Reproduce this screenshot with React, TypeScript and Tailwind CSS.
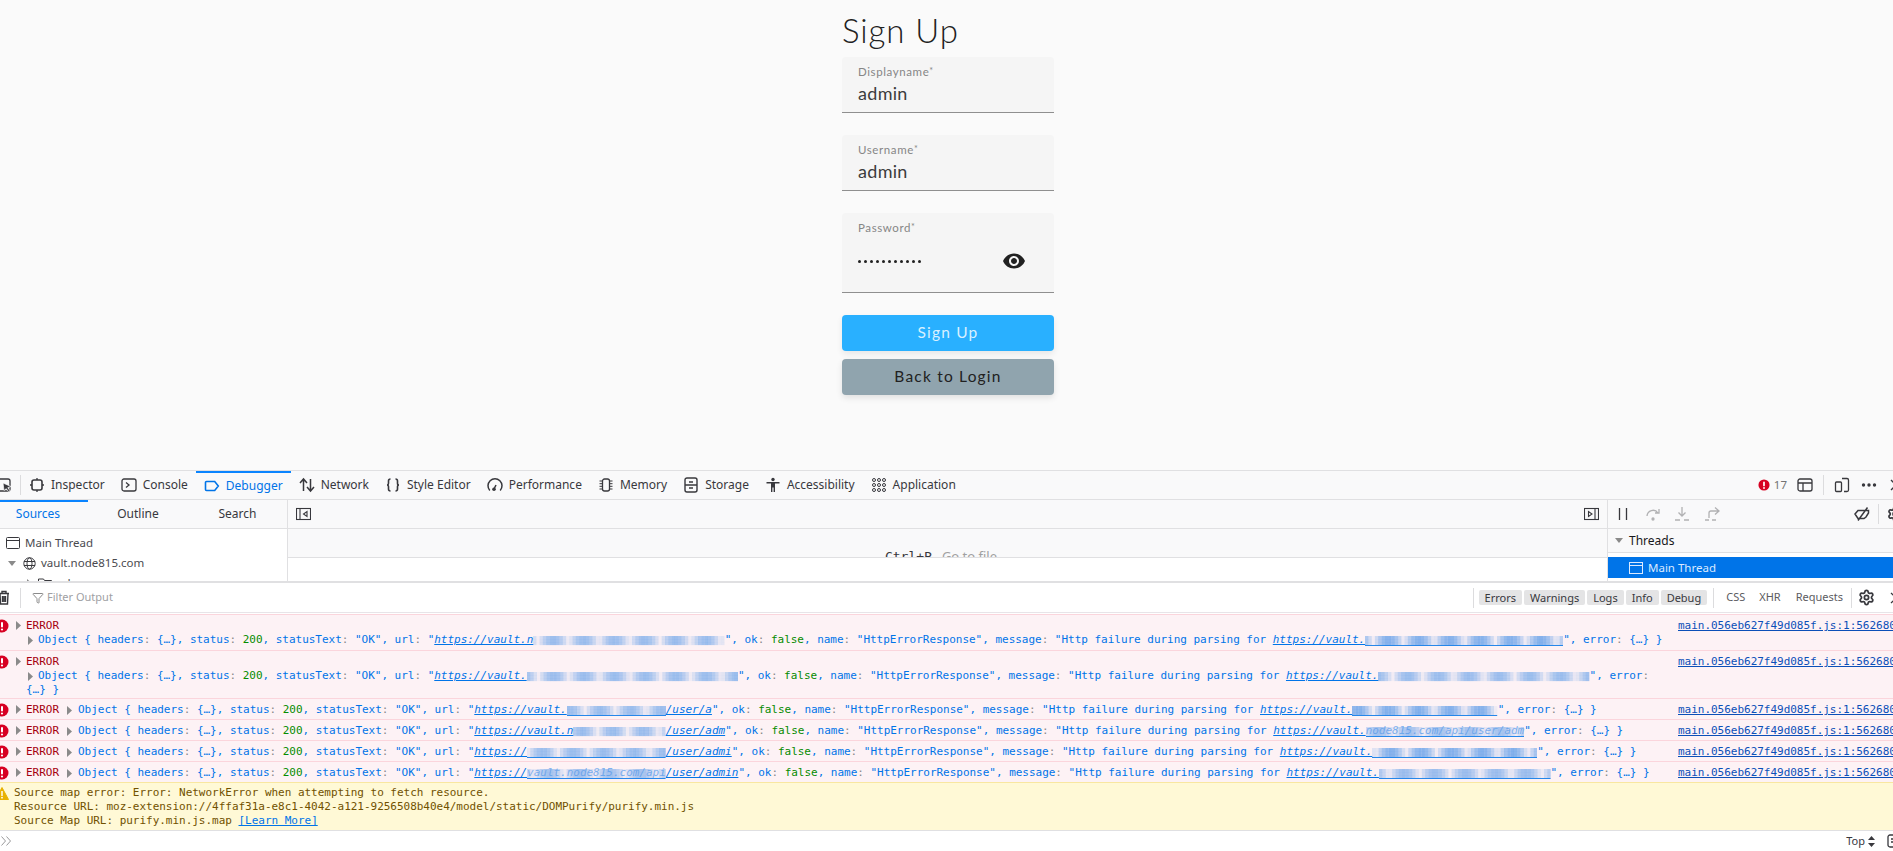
import React from "react";
import { Settings, Filter } from "lucide-react";

const I = ({ className = "", children, w = 16, h = 16, vb = "0 0 16 16" }: { className?: string; children: React.ReactNode; w?: number; h?: number; vb?: string }) => (
  <svg width={w} height={h} viewBox={vb} fill="none" stroke="currentColor" strokeWidth="1.3" className={"shrink-0 " + className}>{children}</svg>
);

const tabs: { name: string; icon: React.ReactNode; active?: boolean }[] = [
  { name: "Inspector", icon: <><rect x="3" y="3" width="10" height="10" rx="2" strokeWidth="1.6" /><path d="M8 1v2M8 13v2M1 8h2M13 8h2" /></> },
  { name: "Console", icon: <><rect x="1" y="2" width="14" height="12" rx="2" /><path d="M5 5.5 8 8l-3 2.5" /></> },
  { name: "Debugger", active: true, icon: <path strokeWidth="1.6" d="M2.5 3.5h8.2l3.6 4.5-3.6 4.5H2.5a1 1 0 0 1-1-1v-7a1 1 0 0 1 1-1z" /> },
  { name: "Network", icon: <path strokeWidth="1.5" d="M4.5 14V2.5M1 6l3.5-4L8 6M11.5 2v11.5M8 10l3.5 4 3.5-4" /> },
  { name: "Style Editor", icon: <path strokeWidth="1.6" d="M5.5 2C4 2 3.5 2.6 3.5 4v2.2C3.5 7.2 3 8 2 8c1 0 1.500.8 1.500 1.800V12c0 1.400.5 2 2 2M10.500 2c1.500 0 2 .6 2 2v2.200c0 1 .5 1.800 1.500 1.800-1 0-1.500.8-1.500 1.800V12c0 1.400-.5 2-2 2" /> },
  { name: "Performance", icon: <><path strokeWidth="1.5" d="M2.800 13.500a7 7 0 1 1 10.400 0" /><path strokeWidth="1.5" d="M7 12l2-4" /><circle cx="7" cy="12.300" r="1.800" fill="currentColor" stroke="none" /></> },
  { name: "Memory", icon: <><rect x="4.500" y="2" width="7" height="12" rx="2" /><path strokeWidth="1" d="M1.500 4h3M1.500 6.700h3M1.500 9.300h3M1.500 12h3M11.500 4h3M11.500 6.700h3M11.500 9.300h3M11.500 12h3" /></> },
  { name: "Storage", icon: <><rect x="2" y="1" width="12" height="14" rx="2" strokeWidth="1.400" /><path d="M2 8h12M6 5h4M6 11h4" /></> },
  { name: "Accessibility", icon: <><circle cx="8" cy="2.500" r="1.700" fill="currentColor" stroke="none" /><path fill="currentColor" stroke="none" d="M1.500 5h13v1.500h-4.500V15H8.600v-4.500H7.400V15H6V6.500H1.500z" /></> },
  { name: "Application", icon: <g strokeWidth="1"><circle cx="3" cy="3" r="1.500" /><circle cx="8" cy="3" r="1.500" /><circle cx="13" cy="3" r="1.500" /><circle cx="3" cy="8" r="1.500" /><circle cx="8" cy="8" r="1.500" /><circle cx="13" cy="8" r="1.500" /><circle cx="3" cy="13" r="1.500" /><circle cx="8" cy="13" r="1.500" /><circle cx="13" cy="13" r="1.500" /></g> },
];

const Blur = ({ n, seed = 1, line = false, alpha = 0.55 }: { n: number; seed?: number; line?: boolean; alpha?: number }) => {
  const w = n * 6.6;
  const cells: React.ReactNode[] = [];
  for (let r = 0; r < 3; r++) {
    for (let c = 0; c < Math.ceil(w / 3.3); c++) {
      const v = Math.abs(Math.sin(seed * 12.9 + c * 78.2 + r * 37.7)) % 1;
      cells.push(<rect key={r + "-" + c} x={c * 3.3} y={3 + r * 3} width="3.4" height="3.1" fill="#5c9be8" opacity={v * alpha + 0.05} />);
    }
  }
  return (
    <svg width={w} height="14" className="inline-block align-top">
      {cells}
      {line && <rect x="0" y="12" width={w} height="1" fill="#0074e8" opacity="0.85" />}
    </svg>
  );
};

const Half = ({ text, seed }: { text: string; seed: number }) => (
  <span className="relative inline-block h-[14px] align-top">
    {text}
    <span className="absolute left-0 top-0 h-[14px] overflow-hidden bg-[#fdf2f5]/50"><Blur n={text.length} seed={seed} line alpha={0.5} /></span>
  </span>
);

const L = ({ children }: { children: React.ReactNode }) => <span className="italic underline">{children}</span>;
const C = () => <span className="text-[#8a8a8a]">:</span>;
const Tri = ({ className = "" }: { className?: string }) => (
  <svg width="5" height="9" viewBox="0 0 5 9" className={"inline-block shrink-0 " + className}><path d="M0 0l5 4.500L0 9z" fill="#8a8a8a" /></svg>
);
const Err = () => (
  <svg width="14" height="14" viewBox="0 0 14 14" className="ml-[-5px] mr-[7px] shrink-0"><circle cx="7" cy="7" r="6.500" fill="#d70022" /><rect x="6" y="3" width="2" height="5.500" rx="1" fill="#fff" /><circle cx="7" cy="10.500" r="1.100" fill="#fff" /></svg>
);

const Body = ({ url, msg, breakErr }: { url: React.ReactNode; msg: React.ReactNode; breakErr?: boolean }) => (
  <>
    Object {"{"} headers<C /> {"{…}"}, status<C /> <span className="text-[#058b00]">200</span>, statusText<C /> "OK", url<C /> "<L>{url}</L>", ok<C /> <span className="text-[#058b00]">false</span>, name<C /> "HttpErrorResponse", message<C /> "Http failure during parsing for <L>{msg}</L>", error<C />{" "}
    {breakErr ? <><br />{"{…} }"}</> : "{…} }"}
  </>
);

const Source = () => <span className="w-[230px] shrink-0 text-[#0b4fb8] underline">main.056eb627f49d085f.js:1:562680</span>;

const Row = ({ h, inline, url, msg, breakErr }: { h: string; inline: boolean; url: React.ReactNode; msg: React.ReactNode; breakErr?: boolean }) => (
  <div className={"flex items-start shrink-0 border-t border-[#fbd5dc] bg-[#fdf2f5] pt-[4px] leading-[14px] text-[#0074e8] " + h}>
    <Err />
    <Tri className="mr-[5px] mt-[2px]" />
    <div className="w-[1652px] shrink-0 whitespace-nowrap">
      <span className="text-[#a4000f]">ERROR</span>
      {inline ? (
        <>
          <Tri className="ml-[8px] mr-[6px] mt-[3px] align-top" />
          <Body url={url} msg={msg} />
        </>
      ) : (
        <div>
          <Tri className="ml-[2px] mr-[5px] mt-[3px] align-top" />
          <Body url={url} msg={msg} breakErr={breakErr} />
        </div>
      )}
    </div>
    <Source />
  </div>
);

const Field = ({ label, value, tall }: { label: string; value: React.ReactNode; tall?: boolean }) => (
  <div className={"relative rounded-t border-b border-[#8f8f8f] bg-[#f5f5f5] px-4 pt-[7px] " + (tall ? "h-[80px]" : "h-[56px] mb-[22px]")}>
    <div className="text-[11.500px] leading-[16px] tracking-[0.6px] text-[#868686]">{label}<span className="relative top-[-2px] text-[9px]">*</span></div>
    {value}
  </div>
);

export default function App() {
  return (
    <div className="flex h-[851px] w-full flex-col overflow-hidden bg-[#fafafa] font-['Noto_Sans',sans-serif]">
      <div className="flex h-[470px] shrink-0 justify-center pl-[3px] font-['Lato',sans-serif]">
        <div className="w-[212px]">
          <h1 className="flex h-[57px] items-end pb-[7px] text-[33px] font-light leading-[40px] tracking-[0.9px] text-[#212121]">Sign Up</h1>
          <Field label="Displayname" value={<div className="text-[18px] leading-[24px] tracking-[0.3px] text-[#3c3c3c]">admin</div>} />
          <Field label="Username" value={<div className="text-[18px] leading-[24px] tracking-[0.3px] text-[#3c3c3c]">admin</div>} />
          <Field
            tall
            label="Password"
            value={
              <div className="mt-[12px] flex items-center justify-between pr-[12px]">
                <span className="flex gap-[3px]">
                  {Array.from({ length: 11 }).map((_, i) => <span key={i} className="h-[3px] w-[3px] rounded-full bg-[#212121]" />)}
                </span>
                <svg width="24" height="24" viewBox="0 0 24 24" fill="#212121"><path d="M12 4.500C7 4.500 2.730 7.610 1 12c1.730 4.390 6 7.500 11 7.500s9.270-3.110 11-7.500c-1.730-4.390-6-7.500-11-7.500zM12 17c-2.760 0-5-2.240-5-5s2.240-5 5-5 5 2.240 5 5-2.240 5-5 5zm0-8c-1.660 0-3 1.340-3 3s1.340 3 3 3 3-1.340 3-3-1.340-3-3-3z" /></svg>
              </div>
            }
          />
          <button className="mt-[22px] flex h-[36px] w-full items-center justify-center rounded bg-[#29b0ff] text-[15.500px] tracking-[1.200px] text-[#d8f0ff] shadow-[0_3px_6px_rgba(0,0,0,0.08)]">Sign Up</button>
          <button className="mt-[8px] flex h-[36px] w-full items-center justify-center rounded bg-[#90a4ae] text-[15.500px] tracking-[1.200px] text-[#212121] shadow-[0_3px_6px_rgba(0,0,0,0.1)]">Back to Login</button>
        </div>
      </div>

      <div className="flex flex-1 flex-col overflow-hidden bg-white text-[12px] text-[#38383d]">
        <div className="flex h-[30px] shrink-0 items-center border-y border-[#e0e0e2] bg-[#f9f9fa]">
          <svg width="16" height="16" viewBox="0 0 16 16" className="ml-[-4px] shrink-0 text-[#38383d]"><rect x="1" y="2" width="13" height="12" rx="2" fill="none" stroke="currentColor" strokeWidth="1.300" /><path d="M7 6l8 3.500-3.200 1.200 2.200 3-1.500 1-2.200-3L8 13.500z" fill="currentColor" stroke="#f9f9fa" strokeWidth="0.700" /></svg>
          <span className="ml-[8px] h-[20px] w-px bg-[#dcdcde]" />
          {tabs.map((t) => (
            <div key={t.name} className={"relative flex h-full shrink-0 items-center gap-[6px] px-[8px] " + (t.active ? "border-t-2 border-[#0a84ff] text-[#0074e8]" : "")}>
              <I className={t.active ? "" : "text-[#38383d]"}>{t.icon}</I>
              <span>{t.name}</span>
            </div>
          ))}
          <div className="flex-1" />
          <svg width="12" height="12" viewBox="0 0 14 14"><circle cx="7" cy="7" r="6.500" fill="#d70022" /><rect x="6" y="3" width="2" height="5.500" rx="1" fill="#fff" /><circle cx="7" cy="10.500" r="1.100" fill="#fff" /></svg>
          <span className="ml-[4px] text-[11.500px] text-[#737373]">17</span>
          <I className="ml-[10px]"><rect x="1" y="2" width="14" height="12" rx="2" /><path d="M1 6h14M6 6v8" /></I>
          <span className="mx-[10px] h-[20px] w-px bg-[#dcdcde]" />
          <I><path d="M8 1.500h5a1.500 1.500 0 0 1 1.500 1.500v10A1.500 1.500 0 0 1 13 14.500H10" /><rect x="1.500" y="5" width="6" height="9.500" rx="1" /></I>
          <svg width="16" height="16" viewBox="0 0 16 16" className="ml-[11px] shrink-0" fill="#38383d"><circle cx="2.500" cy="8" r="1.700" /><circle cx="8" cy="8" r="1.700" /><circle cx="13.500" cy="8" r="1.700" /></svg>
          <I className="ml-[12px] mr-[-12px]" ><path d="M2 3l10 10M12 3L2 13" /></I>
        </div>

        <div className="flex h-[81px] shrink-0 overflow-hidden">
          <div className="flex w-[288px] shrink-0 flex-col border-r border-[#e0e0e2]">
            <div className="flex h-[29px] shrink-0 border-b border-[#e0e0e2] bg-[#f9f9fa]">
              <div className="flex w-[88px] items-center justify-center border-t-2 border-[#0a84ff] pb-[2px] pr-[12px] text-[#0074e8]">Sources</div>
              <div className="flex w-[100px] items-center justify-center">Outline</div>
              <div className="flex w-[99px] items-center justify-center">Search</div>
            </div>
            <div className="flex flex-col overflow-hidden text-[11.500px] text-[#4a4a4f]">
              <div className="flex h-[20px] shrink-0 items-center pl-[6px] mt-[4px] gap-[5px]">
                <I w={14} h={14} vb="0 0 14 14" className="text-[#38383d]"><rect x="0.500" y="1.500" width="13" height="11" rx="1" strokeWidth="1" /><path d="M0.500 4.500h13" strokeWidth="1" /></I>
                <span>Main Thread</span>
              </div>
              <div className="flex h-[20px] shrink-0 items-center pl-[8px]">
                <svg width="8" height="5" viewBox="0 0 8 5" className="shrink-0"><path d="M0 0h8L4 5z" fill="#8a8a8a" /></svg>
                <I w={13} h={13} vb="0 0 13 13" className="ml-[7px] text-[#38383d]"><g strokeWidth="1"><circle cx="6.500" cy="6.500" r="5.700" /><ellipse cx="6.500" cy="6.500" rx="2.500" ry="5.700" /><path d="M1 4.500h11M1 8.500h11" /></g></I>
                <span className="ml-[5px]">vault.node815.com</span>
              </div>
              <div className="flex h-[20px] shrink-0 items-center pl-[27px]">
                <Tri />
                <I w={14} h={12} vb="0 0 14 12" className="ml-[6px] text-[#38383d]"><path strokeWidth="1" d="M.5 2h5l1 1.500h7v8H.5z" /></I>
                <span className="ml-[6px]">cdn</span>
              </div>
            </div>
          </div>

          <div className="flex min-w-0 flex-1 flex-col">
            <div className="flex h-[29px] shrink-0 items-center justify-between border-b border-[#e0e0e2] bg-[#f9f9fa] px-[8px] text-[#38383d]">
              <I w={15} h={14} vb="0 0 15 14"><g strokeWidth="1.100"><rect x="0.500" y="1.500" width="14" height="11" /><path d="M4 1.500v11" /><path d="M11 4.500v5L7.500 7z" /></g></I>
              <I w={15} h={14} vb="0 0 15 14"><g strokeWidth="1.100"><rect x="0.500" y="1.500" width="14" height="11" /><path d="M11 1.500v11" /><path d="M4.500 4.500v5L8 7z" /></g></I>
            </div>
            <div className="flex h-[29px] shrink-0 items-start justify-center overflow-hidden border-b border-[#e0e0e2] bg-[#f9f9fa] pr-[13px]">
              <span className="mt-[19px] whitespace-nowrap text-[13px] leading-[16px]"><span className="font-['DejaVu_Sans_Mono',monospace]">Ctrl+P</span><span className="ml-[10px] text-[#a0a0a0]">Go to file</span></span>
            </div>
          </div>

          <div className="flex w-[286px] shrink-0 flex-col border-l border-[#e0e0e2]">
            <div className="flex h-[29px] shrink-0 items-center border-b border-[#e0e0e2] bg-[#f9f9fa] pl-[10px] text-[#b1b1b3]">
              <I w={10} h={14} vb="0 0 10 14" className="text-[#38383d]"><path d="M1.500 1v12M8.500 1v12" /></I>
              <I w={16} h={16} className="ml-[17px]"><path d="M2 10a6 6 0 0 1 11-3M14 3v4h-4" /><circle cx="8" cy="13" r="1" fill="currentColor" /></I>
              <I w={16} h={16} className="ml-[13px]"><path d="M8 1v9M4.500 6.500 8 10l3.500-3.500M1 14h5M10 14h5" /></I>
              <I w={16} h={16} className="ml-[14px]"><path d="M5 12V7a2 2 0 0 1 2-2h8M11 1.500 15 5l-4 3.500M1 14h4M8 14h4" /></I>
              <div className="flex-1" />
              <I w={16} h={16} className="text-[#38383d]"><path strokeWidth="1.500" d="M1 8l3-3.500h10.500v2.500L12 11l-2 1.500H4zM13.500 1.500 4 14.500" /></I>
              <span className="ml-[8px] h-[20px] w-px bg-[#dcdcde]" />
              <Settings size={16} strokeWidth={2.500} className="ml-[8px] mr-[-10px] shrink-0 text-[#38383d]" />
            </div>
            <div className="flex h-[24px] shrink-0 items-center border-b border-[#e0e0e2] bg-[#f9f9fa] pl-[7px]">
              <svg width="8" height="5" viewBox="0 0 8 5" className="shrink-0"><path d="M0 0h8L4 5z" fill="#8a8a8a" /></svg>
              <span className="ml-[6px] text-[12px] text-[#18181a]">Threads</span>
            </div>
            <div className="mt-[4px] flex h-[21px] shrink-0 items-center gap-[5px] bg-[#0074e8] pl-[21px] text-[11.500px] text-[#dbeaff]">
              <I w={14} h={14} vb="0 0 14 14"><rect x="0.500" y="1.500" width="13" height="11" strokeWidth="1" /><path d="M0.500 4.500h13" strokeWidth="1" /></I>
              <span>Main Thread</span>
            </div>
          </div>
        </div>
        <div className="h-[2px] shrink-0 bg-[#e0e0e2]" />

        <div className="flex h-[30px] shrink-0 items-center border-b border-[#e8e4e8] bg-white text-[11px]">
          <I w={12} h={15} vb="0 0 12 15" className="ml-[-2px] text-[#38383d]"><path strokeWidth="1.400" d="M1 3.500h10M4 3.500V1.500h4v2M2 3.500l.5 10.500h7L10 3.500M4.500 6v6M6 6v6M7.500 6v6" /></I>
          <span className="ml-[10px] h-[20px] w-px bg-[#dcdcde]" />
          <Filter size={12} className="ml-[11px] shrink-0 text-[#8a8a8a]" />
          <span className="ml-[3px] text-[#a0a0a3]">Filter Output</span>
          <div className="flex-1" />
          <span className="mr-[5px] h-[20px] w-px bg-[#dcdcde]" />
          <div className="flex gap-[2px]">
            {["Errors", "Warnings", "Logs", "Info", "Debug"].map((b) => (
              <span key={b} className="rounded-[2px] bg-[#e4e4e5] px-[6px] text-[#38383d] leading-[15px]">{b}</span>
            ))}
          </div>
          <span className="ml-[6px] mr-[12px] h-[20px] w-px bg-[#dcdcde]" />
          <span className="text-[#5c5c5f]">CSS</span>
          <span className="ml-[14px] text-[#5c5c5f]">XHR</span>
          <span className="ml-[15px] text-[#5c5c5f]">Requests</span>
          <span className="ml-[8px] h-[20px] w-px bg-[#dcdcde]" />
          <Settings size={17} strokeWidth={2.500} className="ml-[6px] shrink-0 text-[#38383d]" />
          <I w={14} h={14} vb="0 0 14 14" className="ml-[15px] mr-[-11px]"><path d="M1 2l11 10M12 2 1 12" /></I>
        </div>
        <div className="h-px shrink-0 bg-white" />

        <div className="flex flex-col font-['DejaVu_Sans_Mono',monospace] text-[11px] tracking-[-0.02px]">
          <Row h="h-[36px]" inline={false} url={<>https://vault.n<Blur n={29} seed={1} /></>} msg={<>https://vault.<Blur n={30} seed={2} line alpha={0.7} /></>} />
          <Row h="h-[48px]" inline={false} breakErr url={<>https://vault.<Blur n={32} seed={3} /></>} msg={<>https://vault.<Blur n={32} seed={4} /></>} />
          <Row h="h-[21px]" inline url={<>https://vault.<Blur n={15} seed={5} line />/user/a</>} msg={<>https://vault.<Blur n={22} seed={6} line alpha={0.7} /></>} />
          <Row h="h-[21px]" inline url={<>https://vault.n<Blur n={14} seed={7} />/user/adm</>} msg={<>https://vault.<Half text="node815.com/api/user/adm" seed={8} /></>} />
          <Row h="h-[21px]" inline url={<>https://<Blur n={21} seed={9} line />/user/admi</>} msg={<>https://vault.<Blur n={25} seed={10} line alpha={0.7} /></>} />
          <Row h="h-[21px]" inline url={<>https://<Half text="vault.node815.com/api" seed={11} />/user/admin</>} msg={<>https://vault.<Blur n={26} seed={12} line /></>} />
          <div className="flex h-[49px] shrink-0 items-start border-y border-t-[#f9e7a0] border-b-[#e0e0e2] bg-[#fff9d6] pt-[3px] leading-[14px] text-[#715100]">
            <svg width="14" height="13" viewBox="0 0 14 13" className="ml-[-5px] mr-[5px] mt-px shrink-0"><path d="M7 .5 13.500 12.500H.5z" fill="#e8b100" stroke="#e8b100" strokeLinejoin="round" /><rect x="6.300" y="4" width="1.400" height="5" fill="#fff" /><circle cx="7" cy="10.700" r="0.900" fill="#fff" /></svg>
            <div className="whitespace-nowrap">
              <div>Source map error: Error: NetworkError when attempting to fetch resource.</div>
              <div>Resource URL: moz-extension://4ffaf31a-e8c1-4042-a121-9256508b40e4/model/static/DOMPurify/purify.min.js</div>
              <div>Source Map URL: purify.min.js.map <span className="text-[#0074e8] underline">[Learn More]</span></div>
            </div>
          </div>
        </div>

        <div className="flex h-[20px] flex-1 items-center">
          <svg width="11" height="10" viewBox="0 0 11 10" fill="none" stroke="#9a9a9c" strokeWidth="1" className="ml-px shrink-0"><path d="M.5.500 4.500 5 .5 9.500M5.500.500 9.500 5 5.500 9.500" /></svg>
          <div className="flex-1" />
          <span className="text-[11px] text-[#38383d]">Top</span>
          <svg width="7" height="11" viewBox="0 0 7 11" fill="#38383d" className="ml-[3px] shrink-0"><path d="M3.500 0 7 4H0zM3.500 11 0 7h7z" /></svg>
          <I w={14} h={14} vb="0 0 14 14" className="ml-[12px] mr-[-8px]"><rect x="1" y="1" width="12" height="12" rx="2" /><path d="M4 5h6M4 8h6" /></I>
        </div>
      </div>
    </div>
  );
}
